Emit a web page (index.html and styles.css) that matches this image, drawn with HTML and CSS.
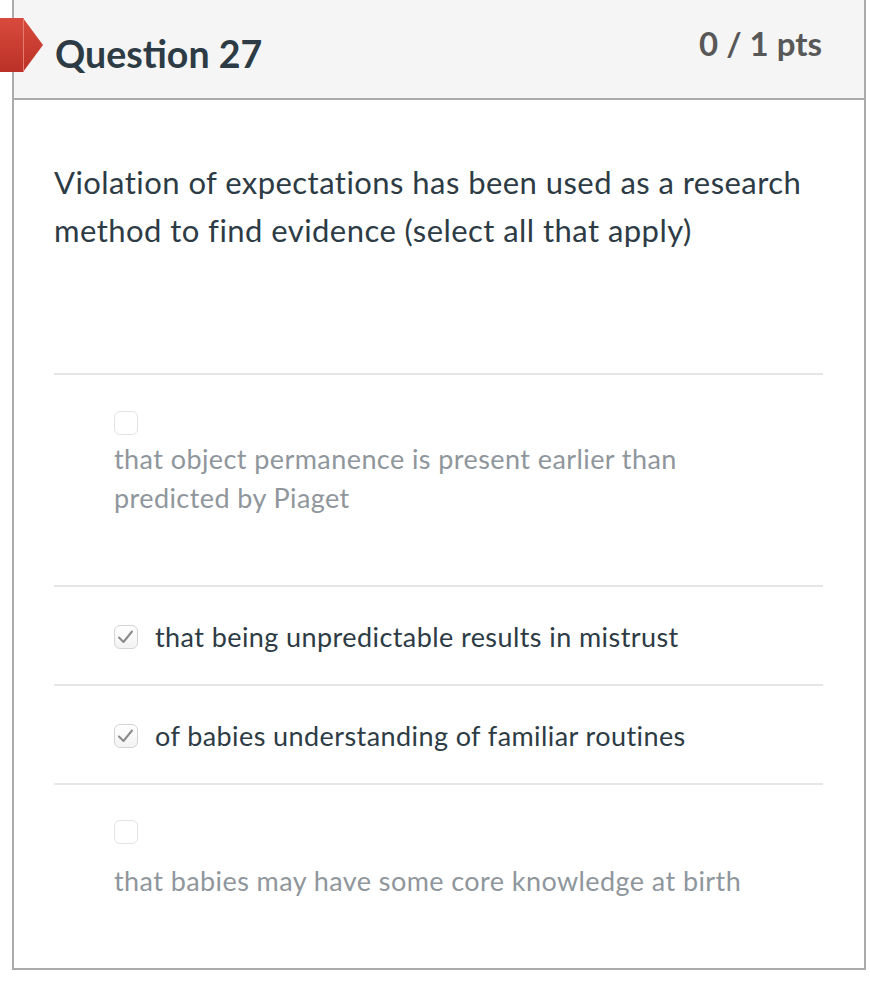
FILE: index.html
```html
<!DOCTYPE html>
<html>
<head>
<meta charset="utf-8">
<link rel="stylesheet" href="styles.css">
</head>
<body>
<div class="flag">
  <svg width="44" height="54" viewBox="0 0 44 54">
    <defs>
      <linearGradient id="fg" x1="0" y1="0" x2="0" y2="1">
        <stop offset="0" stop-color="#d84a3d"/>
        <stop offset="1" stop-color="#bb3127"/>
      </linearGradient>
    </defs>
    <polygon points="0,0 23,0 43,27 23,54 0,54" fill="url(#fg)"/>
    <line x1="23.5" y1="0" x2="23.5" y2="54" stroke="#e47b70" stroke-width="1"/>
  </svg>
</div>
<div class="quiz">
  <div class="header">
    <h2 class="title">Question 27</h2>
    <div class="pts">0 / 1 pts</div>
  </div>
  <div class="body">
    <p class="question">Violation of expectations has been used as a research method to find evidence (select all that apply)</p>
    <div class="answers">
      <div class="answer stacked first">
        <span class="box"></span>
        <div class="label muted">that object permanence is present earlier than<br>predicted by Piaget</div>
      </div>
      <div class="answer inline">
        <span class="box checked"><svg width="22" height="22" viewBox="0 0 22 22"><path d="M4 11.5 L8.5 16 L17 5.5" fill="none" stroke="#8a8a8a" stroke-width="2" stroke-linecap="round" stroke-linejoin="round"/></svg></span>
        <div class="label">that being unpredictable results in mistrust</div>
      </div>
      <div class="answer inline">
        <span class="box checked"><svg width="22" height="22" viewBox="0 0 22 22"><path d="M4 11.5 L8.5 16 L17 5.5" fill="none" stroke="#8a8a8a" stroke-width="2" stroke-linecap="round" stroke-linejoin="round"/></svg></span>
        <div class="label">of babies understanding of familiar routines</div>
      </div>
      <div class="answer stacked last">
        <span class="box"></span>
        <div class="label muted">that babies may have some core knowledge at birth</div>
      </div>
    </div>
  </div>
</div>
</body>
</html>
```
FILE: styles.css
```css
html, body {
  margin: 0;
  padding: 0;
  background: #ffffff;
}
body {
  font-family: Lato, "Noto Sans", sans-serif;
  color: #2d3b45;
}
.flag {
  position: absolute;
  left: 0;
  top: 18px;
  width: 44px;
  height: 54px;
  z-index: 2;
}
.flag svg {
  display: block;
}
.quiz {
  margin-left: 12px;
  width: 854px;
  box-sizing: border-box;
  border: 2px solid #ababab;
  border-top: none;
}
.header {
  height: 98px;
  box-sizing: content-box;
  background: #f5f5f5;
  border-bottom: 2px solid #ababab;
  display: flex;
  justify-content: space-between;
  align-items: flex-start;
  padding: 0 42px 0 41px;
}
.title {
  margin: 31px 0 0 0;
  font-size: 37.5px;
  line-height: 1.2;
  font-weight: 700;
  color: #2d3b45;
}
.pts {
  margin-top: 24px;
  font-size: 33px;
  line-height: 1.2;
  font-weight: 700;
  color: #585858;
}
.body {
  padding: 58px 41px 0 40px;
}
.question {
  margin: 0;
  font-size: 31px;
  letter-spacing: 0.45px;
  line-height: 48px;
  color: #2d3b45;
  width: 770px;
}
.answers {
  margin-top: 119px;
}
.answer {
  border-top: 2px solid #e6e6e6;
  padding-left: 60px;
}
.answer.stacked {
  padding-top: 36px;
  padding-bottom: 68px;
}
.answer.first .label {
  margin-top: 4px;
}
.answer.last {
  padding-top: 35px;
}
.answer.last .label {
  margin-top: 17px;
}
.answer.inline {
  display: flex;
  align-items: center;
  gap: 17px;
  padding-top: 30px;
  padding-bottom: 28px;
}
.box {
  display: flex;
  align-items: center;
  justify-content: center;
  width: 24px;
  height: 24px;
  box-sizing: border-box;
  border: 1px solid #e3e3e3;
  border-radius: 6px;
  background: #ffffff;
}
.box.checked {
  border-color: #d4d4d4;
  background: linear-gradient(#ffffff, #f3f3f3);
}
.box svg {
  display: block;
}
.label {
  font-size: 27px;
  letter-spacing: 0.42px;
  line-height: 39px;
  color: #2d3b45;
}
.label.muted {
  color: #8f969c;
}
```
